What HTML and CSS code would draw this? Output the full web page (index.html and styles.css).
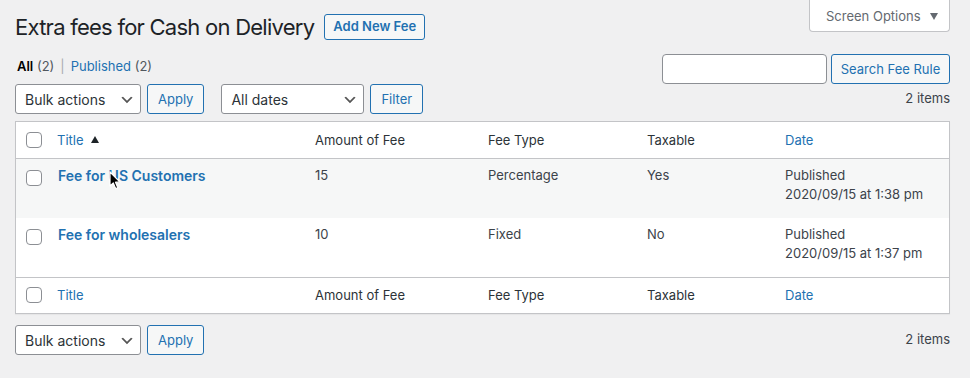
FILE: index.html
```html
<!DOCTYPE html>
<html lang="en">
<head>
<meta charset="utf-8">
<title>Extra fees for Cash on Delivery</title>
<link rel="stylesheet" href="styles.css">
</head>
<body>
<div class="wrap">
  <button class="screen-options" type="button">Screen Options <span class="tri-down"></span></button>

  <div class="heading">
    <h1>Extra fees for Cash on Delivery</h1>
    <a class="btn btn-add" href="#">Add New Fee</a>
  </div>

  <div class="views-row">
    <ul class="subsubsub">
      <li><span class="current">All</span> <span class="count">(2)</span></li>
      <li class="sep">|</li>
      <li><a href="#">Published</a> <span class="count">(2)</span></li>
    </ul>
    <div class="search-box">
      <input class="search-input" type="search" aria-label="Search">
      <button class="btn" type="button">Search Fee Rule</button>
    </div>
  </div>

  <div class="tablenav">
    <div class="actions">
      <select class="sel sel-bulk"><option>Bulk actions</option></select>
      <button class="btn" type="button">Apply</button>
    </div>
    <div class="actions">
      <select class="sel sel-dates"><option>All dates</option></select>
      <button class="btn" type="button">Filter</button>
    </div>
    <div class="num">2 items</div>
  </div>

  <table class="list">
    <colgroup>
      <col class="c-cb"><col class="c-title"><col class="c-amount"><col class="c-type"><col class="c-tax"><col>
    </colgroup>
    <thead>
      <tr>
        <td class="cb"><span class="checkbox"></span></td>
        <th><a href="#" class="sort">Title <span class="tri-up"></span></a></th>
        <th>Amount of Fee</th>
        <th>Fee Type</th>
        <th>Taxable</th>
        <th><a href="#">Date</a></th>
      </tr>
    </thead>
    <tbody>
      <tr class="alt">
        <th class="cb"><span class="checkbox"></span></th>
        <td class="title-cell"><a class="row-title" href="#">Fee for US Customers</a>
          <svg class="cursor" width="12" height="19" viewBox="0 0 12 19" aria-hidden="true"><path d="M1 1 L1 15 L4.3 12 L6.6 17.6 L8.8 16.7 L6.5 11.2 L11 11.2 Z" fill="#000" stroke="#fff" stroke-width="1.2" stroke-linejoin="round"/></svg>
        </td>
        <td>15</td>
        <td>Percentage</td>
        <td>Yes</td>
        <td>Published<br>2020/09/15 at 1:38 pm</td>
      </tr>
      <tr>
        <th class="cb"><span class="checkbox"></span></th>
        <td class="title-cell"><a class="row-title" href="#">Fee for wholesalers</a></td>
        <td>10</td>
        <td>Fixed</td>
        <td>No</td>
        <td>Published<br>2020/09/15 at 1:37 pm</td>
      </tr>
    </tbody>
    <tfoot>
      <tr>
        <td class="cb"><span class="checkbox"></span></td>
        <th><a href="#">Title</a></th>
        <th>Amount of Fee</th>
        <th>Fee Type</th>
        <th>Taxable</th>
        <th><a href="#">Date</a></th>
      </tr>
    </tfoot>
  </table>

  <div class="tablenav bottom">
    <div class="actions">
      <select class="sel sel-bulk"><option>Bulk actions</option></select>
      <button class="btn" type="button">Apply</button>
    </div>
    <div class="num">2 items</div>
  </div>
</div>
</body>
</html>
```

FILE: styles.css
```css
* { box-sizing: border-box; }
html, body { margin: 0; padding: 0; }
body {
  background: #f0f0f1;
  color: #3c434a;
  font-family: Inter, "Noto Sans", "Liberation Sans", sans-serif;
  font-size: 13px;
  line-height: 1.5;
}
a { color: #2271b1; text-decoration: none; }

.wrap {
  position: relative;
  padding: 12px 20px 0 15px;
  width: 970px;
  height: 378px;
}

.screen-options {
  position: absolute;
  top: 0;
  right: 20px;
  width: 141px;
  height: 32px;
  background: #fff;
  border: 1px solid #c3c4c7;
  border-top: none;
  border-radius: 0 0 4px 4px;
  color: #646970;
  font-family: inherit;
  font-size: 13px;
  display: flex;
  align-items: center;
  padding: 1px 0 0 16px;
  gap: 9px;
}
.tri-down {
  width: 0; height: 0;
  border-left: 4.5px solid transparent;
  border-right: 4.5px solid transparent;
  border-top: 7px solid #646970;
}

.heading {
  display: flex;
  align-items: center;
  height: 30px;
}
h1 {
  margin: 0;
  font-size: 22px;
  letter-spacing: -0.75px;
  font-weight: 400;
  line-height: 30px;
  color: #1d2327;
}

.btn {
  display: inline-flex;
  align-items: center;
  height: 30px;
  padding: 0 10px;
  border: 1px solid #2271b1;
  border-radius: 3px;
  background: #f6f7f7;
  color: #2271b1;
  font-family: inherit;
  font-size: 13px;
  white-space: nowrap;
}
.btn-add {
  margin-left: 10px;
  height: 26px;
  padding: 0 8px;
  font-weight: 600;
}

.views-row {
  display: flex;
  justify-content: space-between;
  align-items: flex-start;
  margin-top: 12px;
  height: 30px;
}
.subsubsub {
  list-style: none;
  margin: 2px 0 0 2px;
  padding: 0;
  display: flex;
  gap: 6px;
  line-height: 20px;
  color: #646970;
}
.subsubsub .current { color: #000; font-weight: 600; }
.subsubsub .count { color: #50575e; }
.subsubsub .sep { color: #a7aaad; }

.search-box { display: flex; gap: 4px; }
.search-input {
  width: 165px;
  height: 30px;
  border: 1px solid #8c8f94;
  border-radius: 4px;
  background: #fff;
}
.search-box .btn { width: 119px; justify-content: center; }

.tablenav {
  display: flex;
  align-items: center;
  height: 30px;
  margin-bottom: 7px;
}
.tablenav.bottom { margin-top: 11px; margin-bottom: 0; }
.actions { display: flex; gap: 6px; margin-right: 17px; }
.num { margin-left: auto; color: #3c434a; }

.sel {
  appearance: none;
  -webkit-appearance: none;
  height: 30px;
  padding: 0 24px 0 9px;
  border: 1px solid #8c8f94;
  border-radius: 3px;
  background: #fff url("data:image/svg+xml;charset=utf-8,%3Csvg xmlns='http://www.w3.org/2000/svg' width='20' height='20'%3E%3Cpath d='M5 6l5 5 5-5 2 1-7 7-7-7z' fill='%23555'/%3E%3C/svg%3E") no-repeat right 5px top 55%;
  background-size: 16px 16px;
  color: #2c3338;
  font-family: inherit;
  font-size: 14px;
}
.sel-bulk { width: 126px; }
.sel-dates { width: 143px; }

.list {
  width: 935px;
  table-layout: fixed;
  border-spacing: 0;
  border: 1px solid #c3c4c7;
  background: #fff;
  box-shadow: 0 1px 1px rgba(0,0,0,.04);
}
.c-cb { width: 31px; }
.c-title { width: 258px; }
.c-amount { width: 173px; }
.c-type { width: 159px; }
.c-tax { width: 138px; }

.list th, .list td {
  text-align: left;
  font-weight: 400;
  padding: 8px 10px;
  line-height: 19.5px;
  vertical-align: top;
}
.list thead th, .list thead td, .list tfoot th, .list tfoot td {
  color: #2c3338;
  vertical-align: middle;
  height: 35.5px;
}
.list thead th, .list thead td { border-bottom: 1px solid #c3c4c7; padding-top: 9px; padding-bottom: 7px; }
.list tfoot th, .list tfoot td { border-top: 1px solid #c3c4c7; }
.list tbody tr { height: 59px; }
.list tbody tr.alt { background: #f6f7f7; }
.list tbody td { color: #3c434a; padding-top: 7px; }

.list .cb { padding: 0 0 0 10px; }
.list thead .cb { padding: 1px 0 0 10px; }
.list tbody .cb { padding-top: 11px; }
.checkbox {
  display: block;
  width: 16px;
  height: 16px;
  border: 1px solid #8c8f94;
  border-radius: 4px;
  background: #fff;
}

.sort { display: inline-flex; align-items: center; gap: 7px; }
.tri-up {
  width: 0; height: 0;
  border-left: 4.5px solid transparent;
  border-right: 4.5px solid transparent;
  border-bottom: 7px solid #1d2327;
  margin-top: -2px;
}

.title-cell { position: relative; }
.row-title {
  font-size: 14px;
  font-weight: 600;
  padding-left: 1px;
}
.cursor {
  position: absolute;
  left: 62px;
  top: 12px;
}
```
